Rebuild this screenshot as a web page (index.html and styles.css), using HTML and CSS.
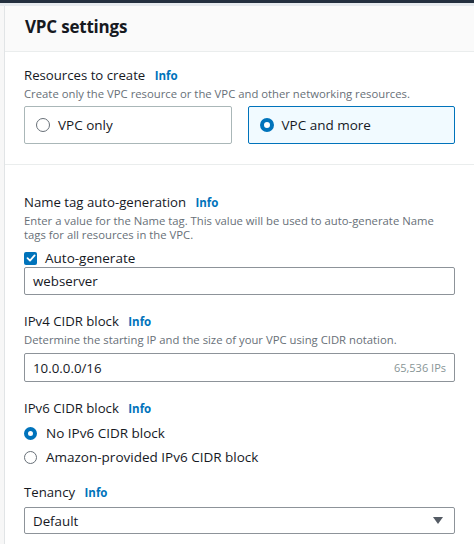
FILE: index.html
```html
<!doctype html>
<html lang="en">
  <head>
    <meta charset="UTF-8" />
    <meta name="viewport" content="width=device-width, initial-scale=1.0" />
    <title>VPC settings</title>
    <link rel="stylesheet" href="styles.css">
  </head>
  <body>
    <div class="topbar"></div>
    <div class="strip"></div>
    <div class="card">
      <div class="card-header">
        <h2>VPC settings</h2>
      </div>

      <div class="section first">
        <div class="label">Resources to create <a class="info">Info</a></div>
        <div class="desc">Create only the VPC resource or the VPC and other networking resources.</div>
        <div class="tiles">
          <div class="tile">
            <span class="radio"></span>
            VPC only
          </div>
          <div class="tile selected">
            <span class="radio checked"></span>
            VPC and more
          </div>
        </div>
      </div>

      <div class="section">
        <div class="label">Name tag auto-generation <a class="info">Info</a></div>
        <div class="desc">Enter a value for the Name tag. This value will be used to auto-generate Name<br>tags for all resources in the VPC.</div>
        <div class="check-row">
          <span class="checkbox">
            <svg width="12" height="12" viewBox="0 0 12 12"><path d="M2.5 6.2 L5 8.6 L9.6 3.4" fill="none" stroke="#fff" stroke-width="1.8" stroke-linecap="round" stroke-linejoin="round"/></svg>
          </span>
          Auto-generate
        </div>
        <div class="input">webserver</div>

        <div class="label spaced">IPv4 CIDR block <a class="info">Info</a></div>
        <div class="desc">Determine the starting IP and the size of your VPC using CIDR notation.</div>
        <div class="input cidr">
          <span>10.0.0.0/16</span>
          <span class="hint">65,536 IPs</span>
        </div>

        <div class="label spaced">IPv6 CIDR block <a class="info">Info</a></div>
        <div class="radio-row"><span class="radio sm checked"></span>No IPv6 CIDR block</div>
        <div class="radio-row"><span class="radio sm"></span>Amazon-provided IPv6 CIDR block</div>

        <div class="label spaced">Tenancy <a class="info">Info</a></div>
        <div class="input select">
          <span>Default</span>
          <span class="caret"></span>
        </div>
      </div>
    </div>
  </body>
</html>
```

FILE: styles.css
```css
body {
  margin: 0;
  background: #f7f7f7;
  font-family: "Open Sans", "Noto Sans", sans-serif;
  color: #16191f;
}
.topbar {
  height: 3px;
  background: #232f3e;
}
.strip {
  height: 3px;
  background: #e6eaee;
}
.card {
  margin-left: 4px;
  border-left: 1px solid #e1e4e6;
  background: #fff;
  height: 538px;
}
.card-header {
  height: 46px;
  box-sizing: border-box;
  background: #fafafa;
  border-bottom: 1px solid #eaeded;
  padding: 0 0 4px 20px;
  display: flex;
  align-items: center;
}
.card-header h2 {
  margin: 0;
  font-size: 17px;
  font-weight: 700;
  letter-spacing: -0.2px;
}
.section {
  padding: 28px 0 0 19px;
}
.section.first {
  padding-top: 14px;
  padding-bottom: 20px;
  border-bottom: 1px solid #eaeded;
}
.label {
  font-size: 13.2px;
  line-height: 18px;
}
.label.spaced {
  margin-top: 17px;
}
.info {
  color: #0073bb;
  font-size: 11.5px;
  font-weight: 700;
  margin-left: 6px;
}
.desc {
  margin-top: 2px;
  font-size: 11.3px;
  line-height: 14px;
  color: #687078;
}
.tiles {
  display: flex;
  gap: 16px;
  margin-top: 5px;
  width: 431px;
}
.tile {
  flex: 1;
  height: 36px;
  border: 1px solid #aab7b8;
  border-radius: 2px;
  display: flex;
  align-items: center;
  padding-left: 11px;
  font-size: 13.5px;
  gap: 8px;
}
.tile.selected {
  border-color: #0073bb;
  background: #f1faff;
}
.radio {
  width: 12px;
  height: 12px;
  border: 1px solid #687078;
  border-radius: 50%;
  background: #fff;
  box-sizing: content-box;
}
.radio.checked {
  width: 6px;
  height: 6px;
  border: 4px solid #0073bb;
}
.radio.sm {
  width: 11px;
  height: 11px;
}
.radio.sm.checked {
  width: 5px;
  height: 5px;
}
.check-row {
  margin-top: 7px;
  height: 18px;
  display: flex;
  align-items: center;
  gap: 8px;
  font-size: 13.5px;
}
.checkbox {
  width: 13px;
  height: 13px;
  border-radius: 2px;
  background: #0073bb;
  display: flex;
  align-items: center;
  justify-content: center;
}
.input {
  box-sizing: border-box;
  width: 431px;
  height: 28px;
  border: 1px solid #8d9399;
  border-radius: 2px;
  padding: 0 8px 0 8px;
  display: flex;
  align-items: center;
  justify-content: space-between;
  font-size: 13.3px;
}
.input.cidr {
  height: 29px;
  margin-top: 6px;
}
.input.select {
  height: 27px;
  margin-top: 5px;
  padding-right: 11px;
}
.hint {
  font-size: 11px;
  color: #879596;
}
.caret {
  width: 0;
  height: 0;
  border-left: 5px solid transparent;
  border-right: 5px solid transparent;
  border-top: 7px solid #545b64;
}
.radio-row {
  height: 18px;
  margin-top: 6px;
  display: flex;
  align-items: center;
  gap: 9px;
  font-size: 13.5px;
}
```
